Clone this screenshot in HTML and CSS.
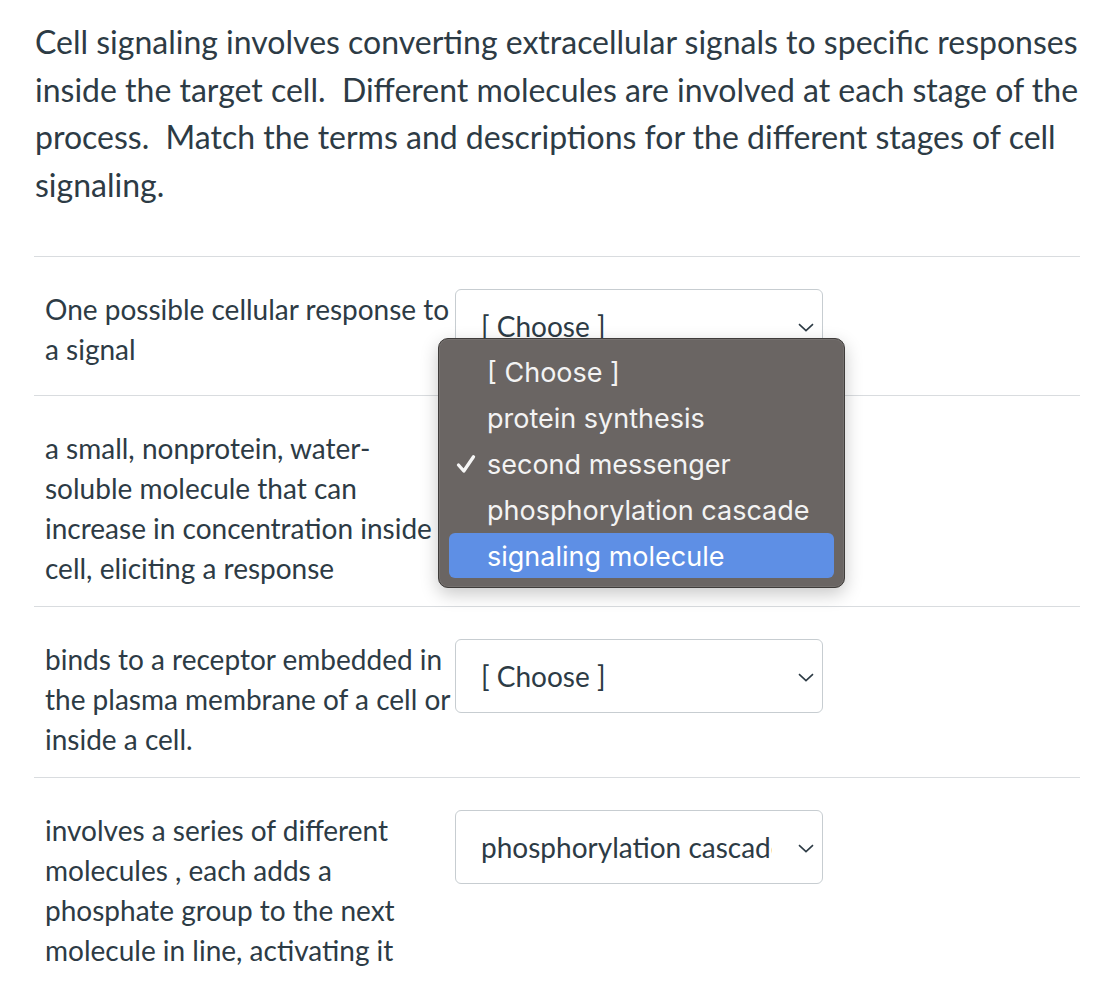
FILE: index.html
```html
<!DOCTYPE html>
<html>
<head>
<meta charset="utf-8">
<link rel="stylesheet" href="styles.css">
</head>
<body>
<div class="page">
  <p class="intro">Cell signaling involves converting extracellular signals to specific responses inside the target cell.&nbsp; Different molecules are involved at each stage of the process.&nbsp; Match the terms and descriptions for the different stages of cell signaling.</p>
  <div class="rows">
    <div class="row">
      <div class="term">One possible cellular response to a signal</div>
      <div class="answer">
        <div class="select"><span class="value">[ Choose ]</span><svg class="chev" width="16" height="9" viewBox="0 0 16 9"><path d="M1 1.2 L8 7.6 L15 1.2" fill="none" stroke="#2d3b45" stroke-width="1.6"/></svg></div>
        <div class="menu">
          <div class="opt">[ Choose ]</div>
          <div class="opt">protein synthesis</div>
          <div class="opt"><svg class="check" width="20" height="20" viewBox="0 0 20 20"><path d="M2.5 11 L7.8 17 L17.5 2.8" fill="none" stroke="#f6f6f6" stroke-width="3.3" stroke-linecap="round" stroke-linejoin="round"/></svg>second messenger</div>
          <div class="opt">phosphorylation cascade</div>
          <div class="opt active">signaling molecule</div>
        </div>
      </div>
    </div>
    <div class="row">
      <div class="term">a small, nonprotein, water-soluble molecule that can increase in concentration inside cell, eliciting a response</div>
      <div class="answer">
        <div class="select"><span class="value">second messenger</span><svg class="chev" width="16" height="9" viewBox="0 0 16 9"><path d="M1 1.2 L8 7.6 L15 1.2" fill="none" stroke="#2d3b45" stroke-width="1.6"/></svg></div>
      </div>
    </div>
    <div class="row">
      <div class="term">binds to a receptor embedded in the plasma membrane of a cell or inside a cell.</div>
      <div class="answer">
        <div class="select"><span class="value">[ Choose ]</span><svg class="chev" width="16" height="9" viewBox="0 0 16 9"><path d="M1 1.2 L8 7.6 L15 1.2" fill="none" stroke="#2d3b45" stroke-width="1.6"/></svg></div>
      </div>
    </div>
    <div class="row">
      <div class="term">involves a series of different molecules , each adds a phosphate group to the next molecule in line, activating it</div>
      <div class="answer">
        <div class="select"><span class="value">phosphorylation cascade</span><svg class="chev" width="16" height="9" viewBox="0 0 16 9"><path d="M1 1.2 L8 7.6 L15 1.2" fill="none" stroke="#2d3b45" stroke-width="1.6"/></svg></div>
      </div>
    </div>
  </div>
</div>
</body>
</html>
```
FILE: styles.css
```css
html, body {
  margin: 0;
  padding: 0;
  background: #ffffff;
}
body {
  font-family: Lato, "Liberation Sans", sans-serif;
  color: #2d3b45;
}
.page {
  padding: 18px 16px 0 34px;
  width: 1046px;
}
.intro {
  margin: 0 0 48px 1px;
  font-size: 32px;
  line-height: 47.5px;
}
.rows {
  display: flex;
  flex-direction: column;
}
.row {
  display: flex;
  align-items: flex-start;
  gap: 4px;
  border-top: 1px solid #d9dcdf;
  padding: 32px 0 18px 11px;
}
.term {
  flex: 0 0 406px;
  font-size: 28px;
  line-height: 40px;
}
.answer {
  position: relative;
  flex: 0 0 368px;
  width: 368px;
  min-width: 0;
}
.select {
  position: relative;
  box-sizing: border-box;
  width: 368px;
  height: 74px;
  margin: 0 0 14px 0;
  border: 1px solid #c7cdd1;
  border-radius: 6px;
  background: #ffffff;
  display: flex;
  align-items: center;
  padding: 0 50px 0 25px;
  font-size: 28px;
}
.value {
  white-space: nowrap;
  overflow: hidden;
  flex: 1 1 auto;
  min-width: 0;
}
.chev {
  position: absolute;
  right: 8px;
  top: 33px;
}
.menu {
  position: absolute;
  left: -17px;
  top: 49px;
  width: 407px;
  box-sizing: border-box;
  padding: 10px 10px 9px 10px;
  background: #6a6563;
  border: 1px solid #3f3c3a;
  border-radius: 10px;
  box-shadow: 0 0 0 1px rgba(255,255,255,0.08) inset, 0 6px 18px rgba(0,0,0,0.22);
  font-family: Inter, "Noto Sans", sans-serif;
  font-size: 27px;
  color: #f3f3f3;
  z-index: 10;
}
.opt {
  position: relative;
  height: 46px;
  line-height: 48px;
  padding-left: 38px;
  border-radius: 6px;
}
.opt.active {
  background: #5e8fe5;
  color: #ffffff;
  height: 45px;
}
.check {
  position: absolute;
  left: 7px;
  top: 13px;
}
```
